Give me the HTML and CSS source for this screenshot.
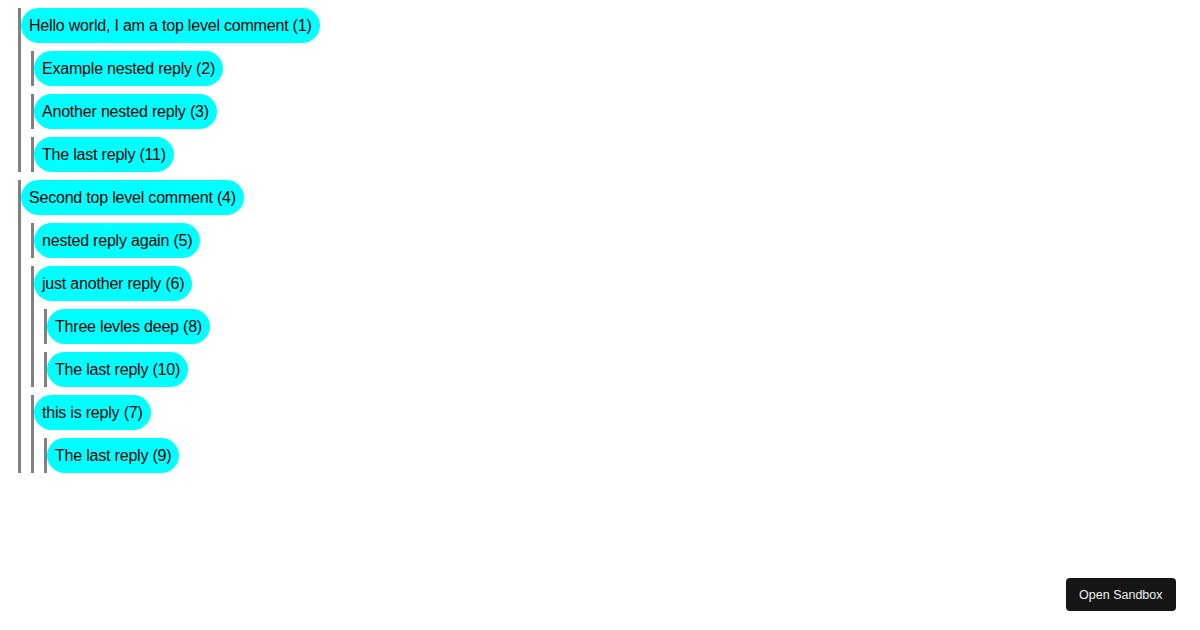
FILE: index.html
```html
<!DOCTYPE html>
<html>
<head>
<meta charset="utf-8">
<link rel="stylesheet" href="styles.css">
</head>
<body>
<div class="thread">
  <div class="comment">
    <div class="bubble">Hello world, I am a top level comment (1)</div>
    <div class="comment">
      <div class="bubble">Example nested reply (2)</div>
    </div>
    <div class="comment">
      <div class="bubble">Another nested reply (3)</div>
    </div>
    <div class="comment">
      <div class="bubble">The last reply (11)</div>
    </div>
  </div>
  <div class="comment">
    <div class="bubble">Second top level comment (4)</div>
    <div class="comment">
      <div class="bubble">nested reply again (5)</div>
    </div>
    <div class="comment">
      <div class="bubble">just another reply (6)</div>
      <div class="comment">
        <div class="bubble">Three levles deep (8)</div>
      </div>
      <div class="comment">
        <div class="bubble">The last reply (10)</div>
      </div>
    </div>
    <div class="comment">
      <div class="bubble">this is reply (7)</div>
      <div class="comment">
        <div class="bubble">The last reply (9)</div>
      </div>
    </div>
  </div>
</div>
<button class="sandbox">Open Sandbox</button>
</body>
</html>
```

FILE: styles.css
```css
body {
  margin: 8px;
  font-family: "Liberation Sans", Arial, sans-serif;
  font-size: 16px;
  color: #000;
  background: #fff;
}
.thread {
  display: flex;
  flex-direction: column;
  gap: 8px;
}
.comment {
  display: flex;
  flex-direction: column;
  align-items: flex-start;
  gap: 8px;
  margin-left: 10px;
  border-left: 3px solid #808080;
}
.comment > .comment {
  align-self: stretch;
}
.bubble {
  background: #00ffff;
  padding: 8px;
  line-height: 19px;
  border-radius: 20px;
  white-space: nowrap;
  letter-spacing: -0.2px;
}
.sandbox {
  position: fixed;
  right: 24px;
  bottom: 19px;
  height: 33px;
  padding: 0 13.5px;
  background: #151515;
  color: #f0f0f0;
  border: none;
  border-radius: 4px;
  font-family: "Liberation Sans", Arial, sans-serif;
  font-size: 12.5px;
}
```
